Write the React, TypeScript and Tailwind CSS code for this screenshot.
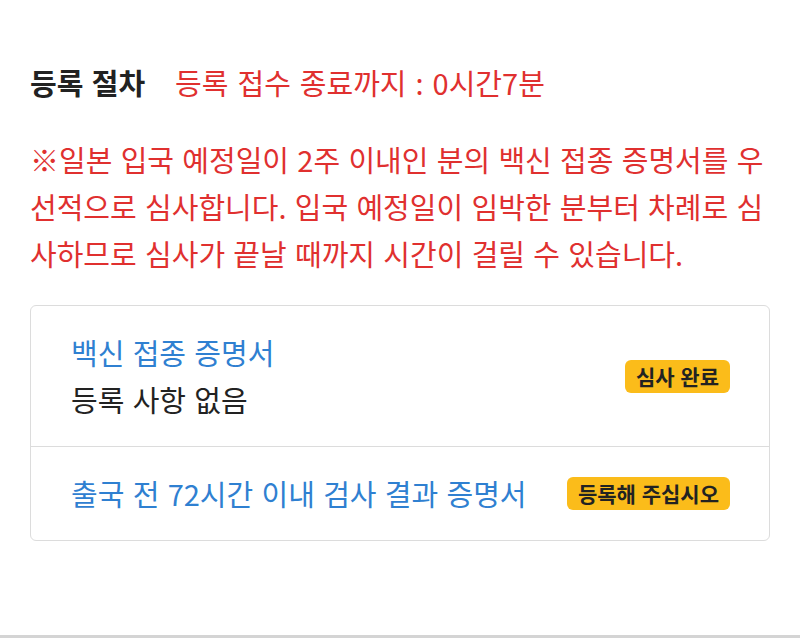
export default function App() {
  return (
    <div
      className="h-[638px] w-[800px] flex flex-col bg-white [word-spacing:1.8px]"
      style={{ fontFamily: '"Noto Sans CJK KR", "Noto Sans", sans-serif' }}
    >
      <div className="px-[30px] pt-[62px]">
        {/* Header */}
        <div className="flex items-center gap-[30px] leading-[40px] text-[29px]">
          <span className="font-bold text-[#222]">등록 절차</span>
          <span className="text-[#e0302f] [word-spacing:2.5px]">등록 접수 종료까지 : 0시간7분</span>
        </div>

        {/* Notice */}
        <p className="mt-[34px] w-[750px] text-[29px] leading-[47px] text-[#e0302f]">
          ※일본 입국 예정일이 2주 이내인 분의 백신 접종 증명서를 우선적으로 심사합니다. 입국 예정일이 임박한 분부터 차례로 심사하므로 심사가 끝날 때까지 시간이 걸릴 수 있습니다.
        </p>

        {/* Documents */}
        <div className="mt-[28px] rounded-[6px] border border-[#dcdcdc]">
          <div className="flex items-center justify-between pl-[40px] pr-[39px] py-[23px] border-b border-[#dcdcdc]">
            <div className="text-[29px] leading-[47px]">
              <div className="text-[#2f80d1]">백신 접종 증명서</div>
              <div className="text-[#222]">등록 사항 없음</div>
            </div>
            <Badge label="심사 완료" />
          </div>
          <div className="flex items-center justify-between pl-[40px] pr-[39px] py-[23px]">
            <div className="text-[29px] leading-[47px] text-[#2f80d1]">출국 전 72시간 이내 검사 결과 증명서</div>
            <Badge label="등록해 주십시오" />
          </div>
        </div>
      </div>

      <div className="mt-auto h-[3px] bg-[#d4d4d4]" />
    </div>
  )
}

function Badge({ label }: { label: string }) {
  return (
    <span className="rounded-[6px] bg-[#fbbc1a] px-[11px] text-[21px] font-bold leading-[33px] text-[#222] [word-spacing:1px]">
      {label}
    </span>
  )
}
